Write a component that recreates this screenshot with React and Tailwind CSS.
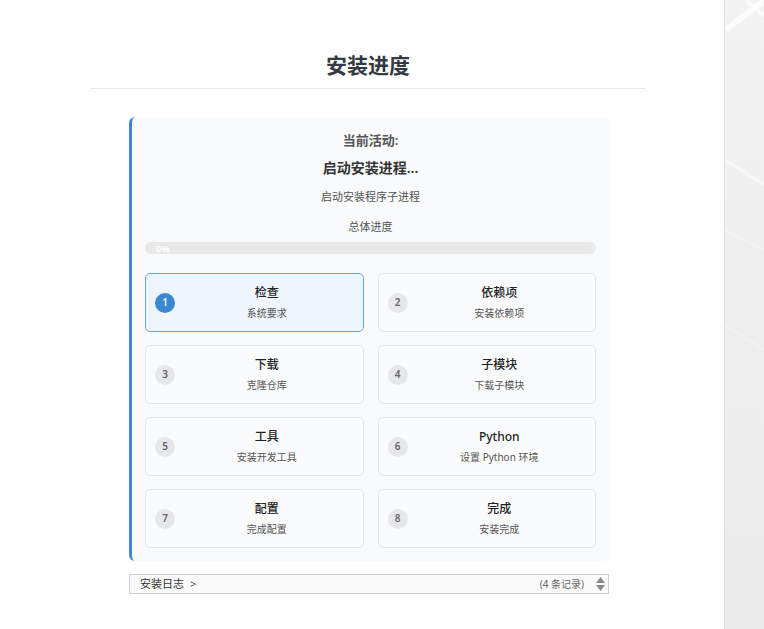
import React from 'react'

const steps = [
  { n: 1, title: '检查', sub: '系统要求', active: true },
  { n: 2, title: '依赖项', sub: '安装依赖项' },
  { n: 3, title: '下载', sub: '克隆仓库' },
  { n: 4, title: '子模块', sub: '下载子模块' },
  { n: 5, title: '工具', sub: '安装开发工具' },
  { n: 6, title: 'Python', sub: '设置 Python 环境' },
  { n: 7, title: '配置', sub: '完成配置' },
  { n: 8, title: '完成', sub: '安装完成' },
]

function StepCard({ step }) {
  const box = step.active
    ? 'border-[#6aa2d9] bg-[#eef5fd]'
    : 'border-[#e3e6ea] bg-[#fafbfc]'
  const badge = step.active
    ? 'bg-[#3b87d1] text-white'
    : 'bg-[#e6e7eb] text-[#666]'
  return (
    <div className={`h-[59px] rounded-[5px] border flex items-center pl-[9px] pr-[4px] ${box}`}>
      <div className={`w-[20px] h-[20px] rounded-full flex items-center justify-center text-[10px] font-semibold ${badge}`}>
        {step.n}
      </div>
      <div className="flex-1 flex flex-col items-center">
        <div className="text-[12px] font-medium text-[#222] leading-[16px]">{step.title}</div>
        <div className="text-[10px] text-[#555] leading-[14px] mt-[5px]">{step.sub}</div>
      </div>
    </div>
  )
}

export default function App() {
  return (
    <div
      className="w-[764px] h-[629px] flex bg-white overflow-hidden"
      style={{ fontFamily: '"Noto Sans", "Noto Sans CJK SC", sans-serif' }}
    >
      <div className="flex-1">
        {/* Titre */}
        <div className="ml-[90px] w-[556px] pt-[50px] pb-[8px] border-b border-[#e6e6e6] text-center">
          <h1 className="text-[21px] font-bold text-[#333a44] leading-[30px]">安装进度</h1>
        </div>

        {/* Carte principale */}
        <div className="ml-[129px] w-[480px] mt-[28px] rounded-[6px] border-l-[3px] border-[#3d8bcd] bg-[#f8fafc] pl-[13px] pr-[13px] pt-[14px] pb-[13px]">
          <div className="text-center text-[13px] font-semibold text-[#555] leading-[18px]">当前活动:</div>
          <div className="text-center text-[14px] font-semibold text-[#333] leading-[20px] mt-[9px]">启动安装进程...</div>
          <div className="text-center text-[11px] text-[#555] leading-[16px] mt-[11px]">启动安装程序子进程</div>
          <div className="text-center text-[11px] text-[#555] leading-[16px] mt-[14px]">总体进度</div>
          <div className="mt-[7px] h-[12px] rounded-full bg-[#e9e9e9] flex items-center pl-[11px]">
            <span className="text-[9px] font-bold text-white leading-none">0%</span>
          </div>

          <div className="grid grid-cols-2 gap-x-[14px] gap-y-[13px] mt-[19px]">
            {steps.map((s) => (
              <StepCard key={s.n} step={s} />
            ))}
          </div>
        </div>

        {/* Journal */}
        <div className="ml-[129px] w-[480px] mt-[13px] h-[20px] border border-[#cfcfcf] bg-[#fafafa] flex items-center pl-[10px] pr-[2px]">
          <span className="text-[11px] text-[#333]">安装日志</span>
          <span className="text-[11px] text-[#555] ml-[6px]">&gt;</span>
          <span className="ml-auto text-[10px] text-[#666]">(4 条记录)</span>
          <div className="ml-[10px] flex flex-col items-center gap-[2px] w-[12px]">
            <svg width="9" height="6" viewBox="0 0 9 6"><path d="M4.5 0 L9 6 L0 6 Z" fill="#888" /></svg>
            <svg width="9" height="6" viewBox="0 0 9 6"><path d="M0 0 L9 0 L4.5 6 Z" fill="#888" /></svg>
          </div>
        </div>
      </div>

      {/* Panneau décoratif */}
      <div className="w-[40px] h-full border-l border-[#e2e2e2] bg-gradient-to-b from-[#f2f2f2] to-[#ebebeb] relative">
        <svg className="absolute inset-0" width="40" height="629" viewBox="0 0 40 629">
          <path d="M0 30 L40 0" stroke="#ffffff" strokeWidth="6" opacity="0.8" />
          <path d="M20 0 L40 16" stroke="#ffffff" strokeWidth="4" opacity="0.7" />
          <path d="M0 160 L40 185" stroke="#ffffff" strokeWidth="3" opacity="0.5" />
          <path d="M0 230 L40 250" stroke="#ffffff" strokeWidth="2" opacity="0.3" />
          <path d="M0 325 L40 350" stroke="#ffffff" strokeWidth="2" opacity="0.3" />
        </svg>
      </div>
    </div>
  )
}
